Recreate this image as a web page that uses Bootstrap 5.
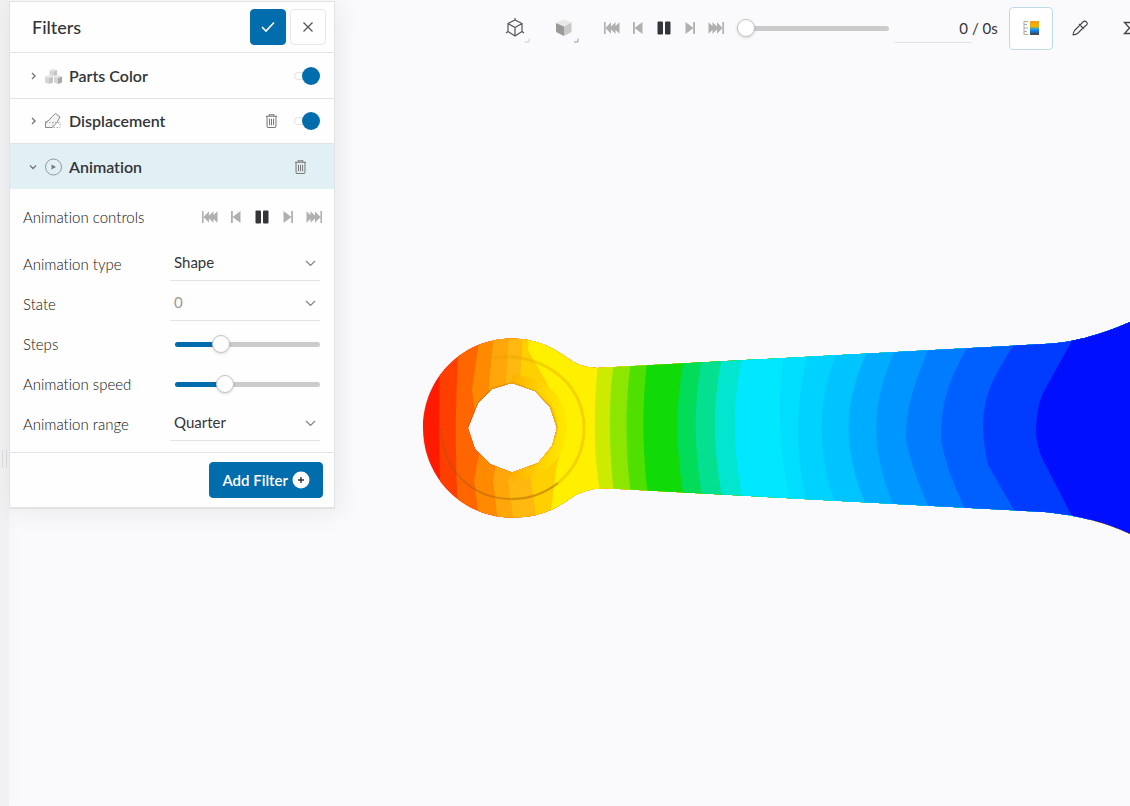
<!DOCTYPE html>
<html lang="en">
<head>
<meta charset="utf-8">
<meta name="viewport" content="width=device-width, initial-scale=1">
<title>Filters</title>
<link href="https://cdn.jsdelivr.net/npm/bootstrap@5.3.0/dist/css/bootstrap.min.css" rel="stylesheet">
<style>
  :root { --brand: #026dad; --ink: #333538; --line: #e2e3e5; --mute: #b0b0b0; }
  body { font-family: Lato, "Liberation Sans", sans-serif; font-size: 15px; line-height: 20px; color: var(--ink); background: #fafafc; font-variant-ligatures: none; }
  svg { display: block; }
  .rail { width: 9px; background: #f1f1f3; box-shadow: 0 0 16px rgba(0,0,0,.04); }
  .grip { width: 5px; height: 18px; margin-left: 2px; margin-top: 450px; border: solid #dcdcdc; border-width: 0 1px; }
  .filters { width: 326px; margin-top: 1px; background: #fefefe; border: 1px solid var(--line); box-shadow: 4px 4px 24px rgba(0,0,0,.07); z-index: 1; }
  .filters-head { height: 51px; padding: 0 8px 0 22px; border-bottom: 1px solid var(--line); }
  .filters-head h1 { font-size: 18px; line-height: 24px; font-weight: 500; }
  .sq { width: 36px; height: 36px; padding: 0; border-radius: 4px; display: flex; align-items: center; justify-content: center; }
  .btn-brand, .btn-brand:hover { background: var(--brand); color: #fff; border-color: var(--brand); }
  .btn-plain { border: 1px solid #e8e8ea; color: #555; }
  .frow { height: 46px; padding: 0 14px 0 16px; border-bottom: 1px solid var(--line); }
  .frow h2 { margin: 0 auto 0 6px; font-size: 16px; line-height: 20px; font-weight: 600; }
  .frow.flat { height: 45px; }
  .frow.open { background: #e1f0f5; border-bottom: 0; padding-right: 27px; }
  .bare { border: 0; background: none; padding: 0; color: #777; }
  .form-switch.sw { min-height: 0; margin: 0; padding: 0; }
  .sw .form-check-input { width: 26px; height: 18px; margin: 0; float: none; display: block; border: 0; background: none; appearance: none; position: relative; }
  .sw .form-check-input::before { content: ""; display: block; width: 20px; height: 8px; margin-top: 5px; border: 1px solid var(--line); border-radius: 4px; }
  .sw .form-check-input::after { content: ""; position: absolute; top: 0; right: 0; width: 18px; height: 18px; border-radius: 50%; background: var(--brand); }
  .frm { padding: 0 13px 8px; border-bottom: 1px solid var(--line); }
  .fld { height: 40px; }
  .fld.first { height: 55px; }
  .fld > label, .fld > .lbl { width: 147px; font-weight: 300; color: #111; }
  .fld .form-select { width: 150px; height: 34px; padding: 0 24px 2px 4px; border: 0; border-bottom: 1px solid var(--line); border-radius: 0; font-size: 15px; color: var(--ink); background-color: transparent; background-position: right 4px center; background-size: 11px 11px;
    background-image: url("data:image/svg+xml,%3csvg xmlns='http://www.w3.org/2000/svg' viewBox='0 0 11 11'%3e%3cpath fill='none' stroke='%23808080' stroke-width='1.2' d='M1 3l4.500 4.500L10 3'/%3e%3c/svg%3e"); }
  .fld .form-select.dim { color: #999; }
  .first .player { margin-right: -6px; }
  .player .bare { width: 26px; height: 24px; display: flex; align-items: center; justify-content: center; color: var(--mute); }
  .player .bare.on { color: var(--ink); }
  input.slide { appearance: none; height: 20px; background: none; padding: 0; }
  input.slide::-webkit-slider-runnable-track { height: 5px; border-radius: 3px; background: linear-gradient(to right, var(--brand) var(--at), #cbcbcb var(--at)); }
  input.slide::-webkit-slider-thumb { appearance: none; width: 18px; height: 18px; margin-top: -7px; border-radius: 50%; background: #fff; border: 1px solid #c4c4c4; box-shadow: 0 1px 3px rgba(0,0,0,.15); }
  .fld .slide { width: 145px; margin-right: 1px; }
  .filters-foot { height: 55px; padding: 0 11px; border-bottom: 1px solid var(--line); }
  .add { height: 36px; padding: 0 12px; border-radius: 4px; font-size: 15px; line-height: 20px; font-weight: 600; }
  .tools { height: 56px; padding-left: 158px; }
  .tool { width: 44px; height: 43px; padding: 0; border: 1px solid transparent; border-radius: 4px; display: flex; align-items: center; justify-content: center; background: none; color: #444; }
  .tool.on { border-color: #bcdcea; background: #fff; margin-left: 1px; }
  .bar-sep { width: 1px; height: 34px; margin-left: 5px; background: #ececef; }
  .tools .slide { width: 152px; margin-left: 8px; }
  .time { margin-left: 5px; width: 78px; height: 30px; border: 0; border-bottom: 1px solid var(--line); background: none; text-align: right; padding: 0 4px 0 0; font-size: 15px; font-weight: 400; color: var(--ink); }
  .total { font-size: 15px; width: 36px; }
  .stage { min-height: 0; }
</style>
</head>
<body>
<svg width="0" height="0" class="position-absolute" aria-hidden="true">
  <defs>
    <symbol id="first" viewBox="0 0 16 14"><path fill="currentColor" d="M0 1h1.600v12H0zM7 1.200v11.600L1.500 7zM11.500 1.200v11.600L5.500 7zM15.500 1.200v11.600L9.500 7z"/></symbol>
    <symbol id="prev" viewBox="0 0 16 14"><path fill="currentColor" d="M3 1h1.800v12H3zM12.500 1v12L4.500 7z"/></symbol>
    <symbol id="pause" viewBox="0 0 16 14"><rect x="1.500" y=".5" width="5.500" height="13" rx="1" fill="currentColor"/><rect x="9" y=".5" width="5.500" height="13" rx="1" fill="currentColor"/></symbol>
    <symbol id="next" viewBox="0 0 16 14"><path fill="currentColor" d="M13 1h-1.800v12H13zM3.500 1v12L11.500 7z"/></symbol>
    <symbol id="last" viewBox="0 0 16 14"><path fill="currentColor" d="M16 1h-1.600v12H16zM9 1.200v11.600L14.500 7zM4.500 1.200v11.600L10.500 7zM.5 1.200v11.600L6.500 7z"/></symbol>
    <symbol id="bin" viewBox="0 0 14 16"><path fill="none" stroke="currentColor" stroke-width="1.100" d="M1 3h12M4.500 3V1.200h5V3M2.200 3v10.500q0 1.500 1.500 1.500h6.600q1.500 0 1.500-1.500V3M4.800 5.500v7M7 5.500v7M9.200 5.500v7"/></symbol>
  </defs>
</svg>
<div class="d-flex vh-100 overflow-hidden">
  <div class="rail flex-shrink-0"><div class="grip"></div></div>
  <aside class="filters flex-shrink-0 align-self-start">
    <header class="filters-head d-flex align-items-center">
      <h1 class="m-0 me-auto">Filters</h1>
      <button class="btn btn-brand sq" aria-label="Apply"><svg width="16" height="16" viewBox="0 0 16 16"><path fill="none" stroke="currentColor" stroke-width="1.600" d="M2 8l4 4 8-8.500"/></svg></button>
      <button class="btn btn-plain sq ms-1" aria-label="Close"><svg width="12" height="12" viewBox="0 0 12 12"><path stroke="currentColor" stroke-width="1.300" d="M1.500 1.500l9 9M10.500 1.500l-9 9"/></svg></button>
    </header>
    <div class="frow d-flex align-items-center">
      <button class="bare" aria-label="Expand Parts Color"><svg width="14" height="14" viewBox="0 0 14 14"><path fill="none" stroke="currentColor" stroke-width="1.400" d="M6 4l3 3-3 3"/></svg></button>
      <svg class="ms-1" width="19" height="18" viewBox="0 0 19 18"><path fill="#e6e6e6" d="M5.500 3l3.500-1.500 4 1.500-3.500 1.500zM1 9.500l4-1.500 4 1.500-4 1.500zM10 9.500l4-1.500 4 1.500-4 1.500z"/><path fill="#d5d5d5" d="M5.500 3l4 1.500V9l-4-1zM1 9.500l4 1.500V17l-4-1.500zM10 9.500l4 1.500V17l-4-1.500z"/><path fill="#c3c3c3" d="M9.500 4.500L13 3v5L9.500 9zM5 11l4-1.500v6L5 17z"/><path fill="#aaa" d="M14 11l4-1.500v6L14 17z"/></svg>
      <h2>Parts Color</h2>
      <div class="form-check form-switch sw"><input class="form-check-input" type="checkbox" checked aria-label="Parts Color"></div>
    </div>
    <div class="frow flat d-flex align-items-center">
      <button class="bare" aria-label="Expand Displacement"><svg width="14" height="14" viewBox="0 0 14 14"><path fill="none" stroke="currentColor" stroke-width="1.400" d="M6 4l3 3-3 3"/></svg></button>
      <svg class="ms-1" width="19" height="18" viewBox="0 0 19 18"><path fill="#f3f3f3" stroke="#8b8b8b" d="M1.500 10Q5.500 9 7.500 5L11.500 1.500l4.500 3.500Q13.500 11.500 8 15.500H1.500z"/><path fill="none" stroke="#aaa" stroke-dasharray="1.500 1.500" d="M2 10.500h14V15.500H9M9 10v5"/></svg>
      <h2>Displacement</h2>
      <button class="bare me-3" aria-label="Delete Displacement"><svg width="13" height="16"><use href="#bin"/></svg></button>
      <div class="form-check form-switch sw"><input class="form-check-input" type="checkbox" checked aria-label="Displacement"></div>
    </div>
    <div class="frow flat open d-flex align-items-center">
      <button class="bare" aria-label="Collapse Animation"><svg width="14" height="14" viewBox="0 0 14 14"><path fill="none" stroke="currentColor" stroke-width="1.400" d="M4 5.500l3 3 3-3"/></svg></button>
      <svg class="ms-1" width="19" height="18" viewBox="0 0 19 18"><circle cx="9.500" cy="9" r="8" fill="none" stroke="#999"/><path fill="#777" d="M7.500 6.500v5l4.500-2.500z"/></svg>
      <h2>Animation</h2>
      <button class="bare" aria-label="Delete Animation"><svg width="13" height="16"><use href="#bin"/></svg></button>
    </div>
    <form class="frm">
      <div class="fld first d-flex align-items-center">
        <span class="lbl">Animation controls</span>
        <div class="player d-flex ms-auto">
          <button type="button" class="bare" aria-label="First"><svg width="16" height="14"><use href="#first"/></svg></button>
          <button type="button" class="bare" aria-label="Previous"><svg width="16" height="14"><use href="#prev"/></svg></button>
          <button type="button" class="bare on" aria-label="Pause"><svg width="16" height="14"><use href="#pause"/></svg></button>
          <button type="button" class="bare" aria-label="Next"><svg width="16" height="14"><use href="#next"/></svg></button>
          <button type="button" class="bare" aria-label="Last"><svg width="16" height="14"><use href="#last"/></svg></button>
        </div>
      </div>
      <div class="fld d-flex align-items-center"><label for="type">Animation type</label><select id="type" class="form-select"><option>Shape</option></select></div>
      <div class="fld d-flex align-items-center"><label for="state">State</label><select id="state" class="form-select dim"><option>0</option></select></div>
      <div class="fld d-flex align-items-center justify-content-between"><label for="steps">Steps</label><input id="steps" class="slide flex-shrink-0" type="range" value="29" style="--at:32%"></div>
      <div class="fld d-flex align-items-center justify-content-between"><label for="speed">Animation speed</label><input id="speed" class="slide flex-shrink-0" type="range" value="32" style="--at:35%"></div>
      <div class="fld d-flex align-items-center"><label for="range">Animation range</label><select id="range" class="form-select"><option>Quarter</option></select></div>
    </form>
    <footer class="filters-foot d-flex align-items-center justify-content-end">
      <button class="btn btn-brand add d-flex align-items-center gap-1">Add Filter <svg width="18" height="18" viewBox="0 0 18 18"><circle cx="9" cy="9" r="8.500" fill="#fff"/><path stroke="#333" stroke-width="1.400" d="M9 6v6M6 9h6"/></svg></button>
    </footer>
  </aside>
  <main class="flex-grow-1 d-flex flex-column overflow-hidden">
    <nav class="tools d-flex align-items-center flex-shrink-0" aria-label="View tools">
      <button class="tool flex-shrink-0" aria-label="Orientation"><svg width="32" height="32" viewBox="0 0 32 32"><path fill="none" stroke="#555" stroke-width="1.200" stroke-linejoin="round" d="M16 8l7 3.500v8L16 24l-7-4.500v-8zM9 11.500l7 4 7-4M16 15.500V24M16 6V8M9 19.500l-2 1.500M23 19.500l2 1.500"/><path fill="none" stroke="#ccc" d="M30 26.500v3.500h-4"/></svg></button>
      <div class="bar-sep"></div>
      <button class="tool flex-shrink-0" aria-label="Shading"><svg width="32" height="32" viewBox="0 0 32 32"><path fill="#e9e9e9" d="M16 7.500l8 3-8 4-8-3.500z"/><path fill="#999" d="M8 11l8 3.500V24l-8-4z"/><path fill="#c9c9c9" d="M16 14.500l7.500-4V20L16 24z"/><path fill="none" stroke="#999" d="M30 26.500v3.500h-4"/></svg></button>
      <div class="bar-sep"></div>
      <div class="player d-flex ms-2">
        <button class="bare" aria-label="First"><svg width="16" height="14"><use href="#first"/></svg></button>
        <button class="bare" aria-label="Previous"><svg width="16" height="14"><use href="#prev"/></svg></button>
        <button class="bare on" aria-label="Pause"><svg width="16" height="14"><use href="#pause"/></svg></button>
        <button class="bare" aria-label="Next"><svg width="16" height="14"><use href="#next"/></svg></button>
        <button class="bare" aria-label="Last"><svg width="16" height="14"><use href="#last"/></svg></button>
      </div>
      <input class="slide flex-shrink-0" type="range" value="0" aria-label="Time" style="--at:0%">
      <input class="time flex-shrink-0" type="text" value="0" aria-label="Current time"><span class="total flex-shrink-0">/ 0s</span>
      <button class="tool on flex-shrink-0" aria-label="Legend"><svg width="18" height="16" viewBox="0 0 18 16"><defs><linearGradient id="lg" x2="0" y2="1"><stop offset="0" stop-color="#f29a1c"/><stop offset=".4" stop-color="#f0b400"/><stop offset=".5" stop-color="#58b090"/><stop offset=".62" stop-color="#1e90ee"/><stop offset=".8" stop-color="#1468c8"/><stop offset=".9" stop-color="#444b55"/></linearGradient></defs><path fill="none" stroke="#aaa" d="M2 1v14M2 1.500h4M2 4.500h3M2 8h4M2 11.500h3M2 14.500h4"/><path fill="url(#lg)" d="M8 1h9v14H8z"/></svg></button>
      <div class="bar-sep"></div>
      <button class="tool flex-shrink-0" aria-label="Pick"><svg width="16" height="16" viewBox="0 0 16 16"><path fill="none" stroke="currentColor" stroke-width="1.100" stroke-linejoin="round" d="M7 4l5 5M8 5L2.500 10.500Q1.500 12 1 15q3-.5 4.500-1.500L11 8M8 5l3.500-3.500q1.500-1 3 .5t0 3L11 8"/></svg></button>
      <div class="bar-sep"></div>
      <button class="tool flex-shrink-0" aria-label="Sum"><svg width="12" height="14" viewBox="0 0 12 14"><path fill="none" stroke="currentColor" stroke-width="1.300" d="M11 3V1.500H1.500L6.500 7l-5 5.500H11V11"/></svg></button>
    </nav>
    <svg class="stage flex-grow-1 w-100" viewBox="335 56 795 750" preserveAspectRatio="xMidYMid slice" role="img" aria-label="Connecting rod displacement contour">
      <defs>
        <clipPath id="rod"><path clip-rule="evenodd" d="M423 428C423 378 463 338.500 512 338.500C535 338.500 552 347 566 357Q580 368 597 368L1045 344Q1085 342 1130 322V534Q1095 517 1045 512L610 488.500Q585 487 568 500C551 512 535 517.500 512 517.500C463 517.500 423 478 423 428zM468 428L478 403 492 389 512 383 535 391 550 407 557 428 552 446 538 463 512 472.500 490 464 475 449z"/></clipPath>
        <linearGradient id="amber"><stop offset="0" stop-color="#ffb000"/><stop offset=".6" stop-color="#ffd400"/><stop offset="1" stop-color="#ffe600"/></linearGradient>
      </defs>
      <g clip-path="url(#rod)">
        <path fill="#ff1a00" d="M415 320h720v220H415z"/>
        <path fill="#ff3f00" d="M441 320Q437 428 442 540H1135V320z"/>
        <path fill="#ff6600" d="M461 320Q451 428 460 540H1135V320z"/>
        <path fill="#ff8a00" d="M482 320L472 390 480 450 474 480 482 540H1135V320z"/>
        <path fill="#ffa60a" d="M495 320L489 385 497 460 493 480 500 540H1135V320z"/>
        <path fill="#ffb810" d="M510 320L506 380 515 470 508 480 516 540H1135V320z"/>
        <path fill="#ffd000" d="M524 320L520 380 560 430 530 475 540 540H1135V320z"/>
        <path fill="#fff000" d="M530 320L528 350 548 385 566 428 556 470 548 540H1135V320z"/>
        <path fill="none" stroke="url(#amber)" stroke-width="9" d="M512 379Q562 384 562 428Q560 470 512 477"/>
        <path fill="none" stroke="#e0a000" stroke-opacity=".35" stroke-width="3" d="M490 358C535 350 584 378 584 428C584 470 550 499 512 499"/>
        <path fill="none" stroke="#a05a10" stroke-opacity=".4" stroke-width="2" d="M441 428C442 470 472 499 512 499Q537 499 558 483"/>
        <path fill="none" stroke="#a07010" stroke-opacity=".35" stroke-width="2" d="M468 428L478 403 492 389 512 383 535 391 550 407 557 428"/>
        <path fill="#cdeb00" d="M599 350C594 400 592 450 601 500H1135V320H599z"/>
        <path fill="#8de600" d="M617 340C607 400 608 450 617 520H1135V320H617z"/>
        <path fill="#4fe000" d="M634 340C624 400 624 450 634 520H1135V320H634z"/>
        <path fill="#10da08" d="M650 340C641 400 641 450 651 520H1135V320H650z"/>
        <path fill="#02dc58" d="M688 340C674 400 674 450 688 520H1135V320H688z"/>
        <path fill="#04e090" d="M706 340C692 400 692 450 707 520H1135V320H706z"/>
        <path fill="#02e6d0" d="M726 340C711 400 711 450 727 520H1135V320H726z"/>
        <path fill="#00e8ff" d="M746 340C731 400 731 450 747 520H1135V320H746z"/>
        <path fill="#00deff" d="M785 340C777 400 777 450 794 520H1135V320H785z"/>
        <path fill="#00d2ff" d="M813 340C793 400 793 450 811 520H1135V320H813z"/>
        <path fill="#00c4ff" d="M838 350C817 400 817 450 834 500L840 520H1135V320H838z"/>
        <path fill="#00acff" d="M868 350C842 405 843 450 866 505L870 520H1135V320H868z"/>
        <path fill="#0096ff" d="M898 345Q856 425 896 510H1135V320H898z"/>
        <path fill="#007cff" d="M930 345C914 385 906 405 906 440Q912 470 930 510H1135V320H930z"/>
        <path fill="#0060ff" d="M969 345C947 382 941 405 941 440Q946 470 968 515H1135V320H969z"/>
        <path fill="#003cff" d="M1017 340C991 380 984 395 983 428Q984 448 988 465L1017 515H1135V320H1017z"/>
        <path fill="#0010ff" d="M1075 335L1043 393Q1036 408 1036 433Q1037 448 1043 460L1075 522V540H1135V320H1075z"/>
      </g>
    </svg>
  </main>
</div>
<script src="https://cdn.jsdelivr.net/npm/bootstrap@5.3.0/dist/js/bootstrap.bundle.min.js"></script>
</body>
</html>
